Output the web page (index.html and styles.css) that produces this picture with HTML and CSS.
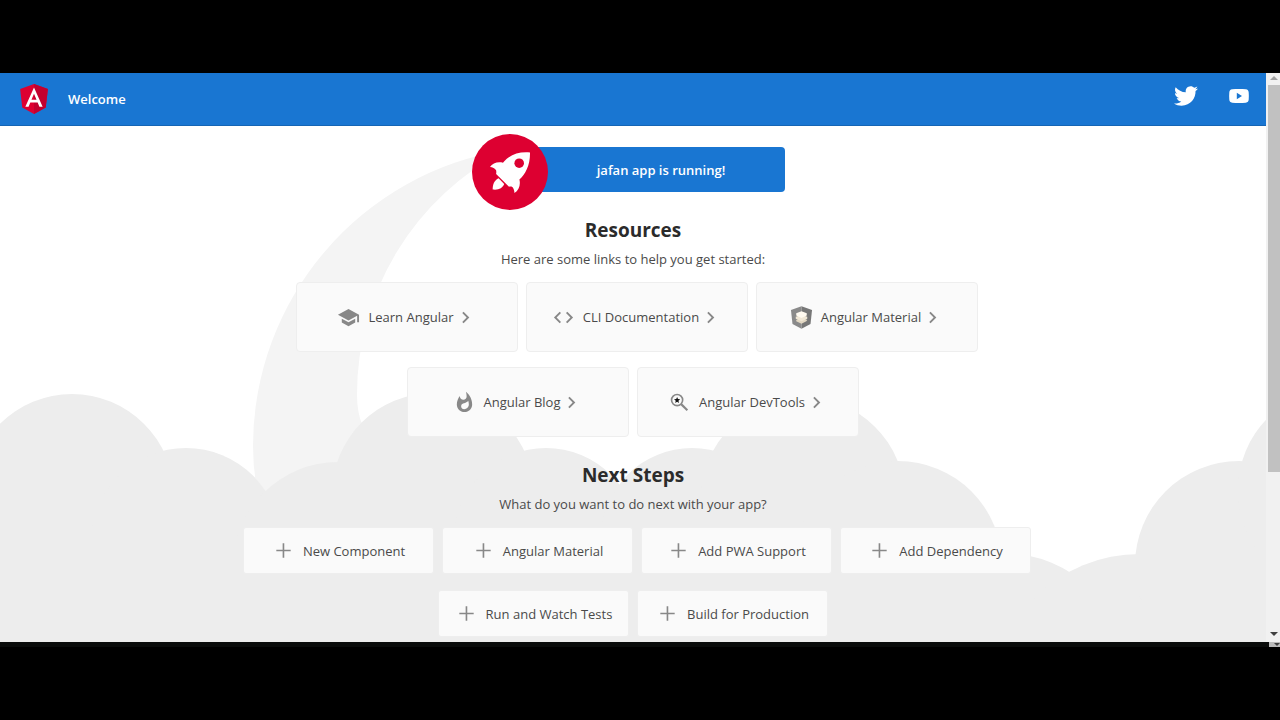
FILE: index.html
```html
<!DOCTYPE html>
<html lang="en">
<head>
    <meta charset="UTF-8">
    <meta name="viewport" content="width=device-width, initial-scale=1.0">
    <title>Jafan</title>
    <link rel="stylesheet" href="styles.css">
</head>
<body>
    <!-- shared icons -->
    <svg class="symbols" aria-hidden="true">
        <symbol id="chevron" viewBox="0 0 24 24"><path d="M10 6L8.59 7.41 13.17 12l-4.58 4.59L10 18l6-6z"/></symbol>
        <symbol id="plus" viewBox="0 0 24 24"><path d="M19.500 12.800h-6.700v6.700h-1.700v-6.700H4.500v-1.700h6.600V4.500h1.700v6.600h6.700z"/></symbol>
    </svg>

    <div class="window">
        <div class="page">
            <header class="toolbar">
                <svg class="logo" viewBox="31 30 188 200" role="img" aria-label="Angular Logo">
                    <path fill="#dd0031" d="M125 30L31.9 63.2l14.2 123.1L125 230l78.9-43.7 14.2-123.1z"/>
                    <path fill="#c3002f" d="M125 30v200l78.9-43.7 14.2-123.1z"/>
                    <path fill="#fff" d="M125 52.1L66.8 182.6h21.7l11.7-29.2h49.4l11.7 29.2H183L125 52.1zm17 83.3h-34l17-40.9 17 40.9z"/>
                </svg>
                <span class="title">Welcome</span>
                <a class="social" href="#" aria-label="Angular on Twitter">
                    <svg width="24" height="24" viewBox="0 0 24 24" fill="#fff"><path d="M24 4.557c-.883.392-1.832.656-2.828.775 1.017-.609 1.798-1.574 2.165-2.724-.951.564-2.005.974-3.127 1.195-.897-.957-2.178-1.555-3.594-1.555-3.179 0-5.515 2.966-4.797 6.045-4.091-.205-7.719-2.165-10.148-5.144-1.29 2.213-.669 5.108 1.523 6.574-.806-.026-1.566-.247-2.229-.616-.054 2.281 1.581 4.415 3.949 4.89-.693.188-1.452.232-2.224.084.626 1.956 2.444 3.379 4.6 3.419-2.07 1.623-4.678 2.348-7.29 2.04 2.179 1.397 4.768 2.212 7.548 2.212 9.142 0 14.307-7.721 13.995-14.646.962-.695 1.797-1.562 2.457-2.549z"/></svg>
                </a>
                <a class="social" href="#" aria-label="Angular on YouTube">
                    <svg width="20" height="24" viewBox="0 0 20 24">
                        <path fill="#fff" d="M3.2 5.3C7 4.8 13 4.8 16.8 5.3c1.900.2 2.800 1.300 2.900 3.100.2 2.300.2 4.900 0 7.200-.1 1.800-1 2.900-2.900 3.100-3.800.5-9.800.5-13.600 0C1.300 18.500.4 17.400.3 15.600.1 13.300.1 10.700.3 8.400.4 6.600 1.300 5.500 3.200 5.300z"/>
                        <path fill="#1976d2" d="M7.800 8.800v6.400L13 12z"/>
                    </svg>
                </a>
            </header>

            <main class="content">
                <svg class="clouds" viewBox="0 126 1266 516" preserveAspectRatio="xMidYMin slice" aria-hidden="true">
                    <path fill="#f4f4f4" d="M506 150A300 300 0 0 0 253 446Q253 480 262 510H380V450Q357 430 357 395A275 275 0 0 1 506 150z"/>
                    <g fill="#ededed">
                        <circle cx="72" cy="496" r="102"/>
                        <circle cx="186" cy="543" r="95"/>
                        <circle cx="338" cy="567" r="105"/>
                        <circle cx="433" cy="494" r="101"/>
                        <circle cx="546" cy="540" r="92"/>
                        <circle cx="692" cy="539" r="91"/>
                        <circle cx="803" cy="499" r="102"/>
                        <circle cx="898" cy="565" r="104"/>
                        <circle cx="1003" cy="680" r="127"/>
                        <circle cx="1140" cy="703" r="149"/>
                        <circle cx="1239" cy="565" r="104"/>
                        <circle cx="1340" cy="490" r="102"/>
                        <path d="M0 500H72V540H960V600H1266V700H0z"/>
                    </g>
                </svg>

                <div class="highlight-card">
                    <svg class="rocket" viewBox="0 0 76 76" aria-hidden="true">
                        <circle cx="38" cy="38" r="38" fill="#dd0031"/>
                        <path fill="#fff" d="M58 18.500C49 17.800 42 19.500 36.500 23.500 34 25.300 32.300 27.300 31 28.800 26 27.500 20.500 29 18 33c2.500.2 5 1.300 6.200 3.500.1 1.300.2 2.200-.1 3.500L37 52.700c1.200-.2 2.300-.1 3.400.2 1.300 1.500 2 3.700 2 6.100 4.500-2.600 6.400-8 5-13.500C53.500 40.500 58.300 31 58 18.500z"/>
                        <path fill="#fff" d="M26.600 44.300l5.600 5.800c-1.500 4-5.800 6.300-11.500 5.500-.2-5.300 2-9.500 5.900-11.300z"/>
                        <circle cx="47.200" cy="29.200" r="4.800" fill="#dd0031"/>
                    </svg>
                    <span>jafan app is running!</span>
                </div>

                <h2>Resources</h2>
                <p>Here are some links to help you get started:</p>

                <div class="card-container resources">
                    <a class="card" href="#">
                        <svg class="icon" viewBox="0 0 24 24"><path d="M5 13.180v4L12 21l7-3.820v-4L12 17l-7-3.820zM12 3L1 9l11 6 9-4.910V17h2V9L12 3z"/></svg>
                        <span>Learn Angular</span>
                        <svg class="chevron"><use href="#chevron"/></svg>
                    </a>
                    <a class="card" href="#">
                        <svg class="icon" viewBox="0 0 24 24"><path d="M9.400 16.600L4.800 12l4.600-4.600L8 6l-6 6 6 6 1.400-1.400zm5.200 0l4.600-4.600-4.600-4.600L16 6l6 6-6 6-1.400-1.400z"/></svg>
                        <span>CLI Documentation</span>
                        <svg class="chevron"><use href="#chevron"/></svg>
                    </a>
                    <a class="card" href="#">
                        <svg class="icon" viewBox="0 0 24 24">
                            <path fill="#8a8a8a" d="M12 .3L1 4.200l1.600 14.500L12 23.800z"/>
                            <path fill="#777" d="M12 .3l11 3.900-1.600 14.500L12 23.800z"/>
                            <path fill="#e3d8c3" d="M6.500 14.500L12 12l6 2.500-1 1.500-5 2.500-5.500-2.500z"/>
                            <path fill="#f0e7d6" d="M6 11.200L12 9l6 2.200v2L12 16l-6-2.800z"/>
                            <path fill="#fffaf0" d="M6.500 7.500L12 5.500l5.500 2v2.300L12 12.500 6.500 9.800z"/>
                        </svg>
                        <span>Angular Material</span>
                        <svg class="chevron"><use href="#chevron"/></svg>
                    </a>
                    <a class="card" href="#">
                        <svg class="icon" viewBox="0 0 24 24"><path d="M13.500.67s.74 2.650.74 4.800c0 2.060-1.350 3.730-3.410 3.730-2.070 0-3.630-1.670-3.630-3.730l.03-.36C5.210 7.510 4 10.620 4 14c0 4.420 3.580 8 8 8s8-3.580 8-8C20 8.610 17.410 3.800 13.500.67zM11.710 19c-1.780 0-3.220-1.400-3.220-3.140 0-1.620 1.050-2.760 2.810-3.120 1.770-.36 3.600-1.210 4.620-2.580.39 1.290.59 2.650.59 4.040 0 2.650-2.150 4.800-4.800 4.800z"/></svg>
                        <span>Angular Blog</span>
                        <svg class="chevron"><use href="#chevron"/></svg>
                    </a>
                    <a class="card" href="#">
                        <svg class="icon" viewBox="0 0 24 24">
                            <circle cx="9.500" cy="9.500" r="5.800" fill="none" stroke="#888" stroke-width="1.700"/>
                            <path fill="none" stroke="#888" stroke-width="2.200" d="M13.700 13.700l6.500 6.300"/>
                            <path fill="#111" d="M9.500 6.300l.9 2.100 2.300.2-1.800 1.500.6 2.300-2-1.200-2 1.200.6-2.300-1.800-1.500 2.300-.2z"/>
                        </svg>
                        <span>Angular DevTools</span>
                        <svg class="chevron"><use href="#chevron"/></svg>
                    </a>
                </div>

                <h2>Next Steps</h2>
                <p>What do you want to do next with your app?</p>

                <div class="card-container">
                    <button class="card card-small"><svg class="icon"><use href="#plus"/></svg><span>New Component</span></button>
                    <button class="card card-small"><svg class="icon"><use href="#plus"/></svg><span>Angular Material</span></button>
                    <button class="card card-small"><svg class="icon"><use href="#plus"/></svg><span>Add PWA Support</span></button>
                    <button class="card card-small"><svg class="icon"><use href="#plus"/></svg><span>Add Dependency</span></button>
                    <button class="card card-small"><svg class="icon"><use href="#plus"/></svg><span>Run and Watch Tests</span></button>
                    <button class="card card-small"><svg class="icon"><use href="#plus"/></svg><span>Build for Production</span></button>
                </div>
            </main>
        </div>

        <div class="scrollbar" aria-hidden="true">
            <svg viewBox="0 0 12 12" fill="#a0a0a0"><path d="M2 7l4-4 4 4z"/></svg>
            <div class="track"><div class="thumb"></div></div>
            <svg viewBox="0 0 12 12" fill="#404040"><path d="M2 2h8L6 6z"/></svg>
        </div>
    </div>
    <div class="edge">
        <svg viewBox="0 0 11 5" aria-hidden="true"><path fill="#bbb" d="M0 0h11v5H0z"/><path fill="#404040" d="M5 1h6L8 4z"/></svg>
    </div>
</body>
</html>
```
FILE: styles.css
```css
* {
    box-sizing: border-box;
}

body {
    display: flex;
    flex-direction: column;
    height: 100vh;
    margin: 0;
    padding: 73px 0;
    background-color: #000;
    color: #333;
    font-family: "Open Sans", "Noto Sans", sans-serif;
    font-size: 13px;
    line-height: 18px;
    overflow: hidden;
}

.symbols {
    display: none;
}

.window {
    display: flex;
    flex: 1;
    min-height: 0;
    background-color: #fff;
}

.page {
    display: flex;
    flex: 1;
    flex-direction: column;
    min-width: 0;
    overflow: hidden;
}

/* toolbar */

.toolbar {
    display: flex;
    flex-shrink: 0;
    align-items: center;
    height: 53px;
    padding: 0 17px 0 20px;
    background-color: #1976d2;
    border-bottom: 1px solid #1565b5;
    color: #fff;
    font-weight: 600;
}

.logo {
    width: 28px;
    height: 30px;
    margin-right: 20px;
}

.title {
    flex: 1;
}

.social {
    height: 30px;
    margin-left: 31px;
}

.social svg {
    display: block;
}

/* content */

.content {
    position: relative;
    display: flex;
    flex: 1;
    flex-direction: column;
    align-items: center;
    min-height: 0;
    padding-top: 21px;
}

.clouds {
    position: absolute;
    top: 0;
    left: 0;
    width: 100%;
    height: 100%;
}

.content > :not(.clouds) {
    position: relative;
    flex-shrink: 0;
}

.highlight-card {
    display: flex;
    align-items: center;
    justify-content: center;
    width: 304px;
    height: 45px;
    margin-bottom: 24px;
    padding-left: 56px;
    border-radius: 4px;
    background-color: #1976d2;
    color: #fff;
    font-weight: 600;
}

.content > .highlight-card .rocket {
    position: absolute;
    top: -13px;
    left: -9px;
    width: 76px;
    height: 76px;
}

h2 {
    margin: 0;
    color: #2b2b2b;
    font-size: 19px;
    font-weight: 700;
    line-height: 28px;
}

p {
    margin: 6px 0 14px;
    color: #4a4a4a;
}

.card-container {
    display: flex;
    flex-wrap: wrap;
    justify-content: center;
    width: 100%;
    max-width: 800px;
    row-gap: 16px;
}

.resources {
    row-gap: 15px;
    margin-bottom: 24px;
}

.card {
    display: flex;
    align-items: center;
    justify-content: center;
    width: 222px;
    height: 70px;
    margin-left: 8px;
    padding: 0;
    border: 1px solid #eee;
    border-radius: 4px;
    background-color: #fafafa;
    color: #4a4a4a;
    font: inherit;
    text-decoration: none;
    cursor: pointer;
}

.card:last-child {
    margin-right: 8px;
}

.card-small {
    width: 191px;
    height: 47px;
    border-radius: 3px;
}

.card:hover {
    background-color: #fff;
}

.icon,
.chevron {
    width: 23px;
    height: 23px;
    fill: #888;
}

.icon {
    margin-right: 8px;
}

/* scrollbar */

.scrollbar {
    display: flex;
    flex-direction: column;
    width: 14px;
    padding-left: 2px;
    background-color: #f1f1f1;
}

.scrollbar svg {
    width: 12px;
    height: 12px;
}

.track {
    flex: 1;
}

.thumb {
    height: 71%;
    background-color: #c1c1c1;
}

.edge {
    display: flex;
    justify-content: flex-end;
    height: 5px;
    background-color: #0a0c0b;
}

.edge svg {
    width: 11px;
    height: 5px;
}
```
